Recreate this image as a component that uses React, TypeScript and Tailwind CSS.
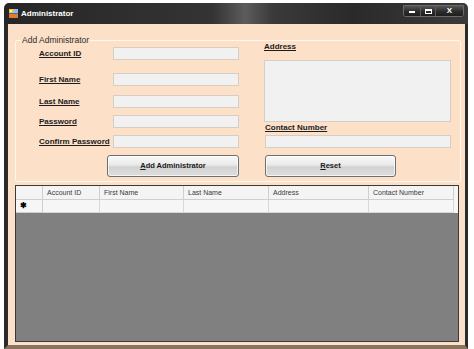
import React from 'react';

const font = "font-['Liberation_Sans',Arial,sans-serif]";

function Field({ label, width = 'w-[126px]' }: { label: string; width?: string }) {
  return (
    <div className="flex h-[13px] items-center">
      <span className="w-[74px] text-[8px] font-bold leading-none text-[#1c1c1c] underline">
        {label}
      </span>
      <div className={`h-[13px] ${width} border border-[#d6cdc4] bg-[#f1f1f1]`} />
    </div>
  );
}

function WinButton({ className, children }: { className: string; children: React.ReactNode }) {
  return (
    <button
      className={`${className} block h-[22px] rounded-[3px] border border-[#6f6f6f] bg-[linear-gradient(180deg,#fafafa_0%,#e9e9e9_45%,#d2d2d2_55%,#dedede_100%)] text-[7.5px] font-bold text-[#1a1a1a] shadow-[inset_0_0_0_1px_#ffffffaa]`}
    >
      {children}
    </button>
  );
}

const columns = [
  { name: 'Account ID', w: 'w-[57px]' },
  { name: 'First Name', w: 'w-[84px]' },
  { name: 'Last Name', w: 'w-[85px]' },
  { name: 'Address', w: 'w-[100px]' },
  { name: 'Contact Number', w: 'w-[85px]' },
];

export default function App() {
  return (
    <div className={`${font} h-[349px] w-[474px] overflow-hidden bg-white pl-[4px] pt-[3px]`}>
      <div className="flex w-[464px] flex-col">
        {/* title bar */}
        <div className="flex h-[21px] items-center rounded-t-[5px] bg-[linear-gradient(90deg,#262626_0%,#343434_45%,#5c5c5c_52%,#3a3a3a_58%,#2a2a2a_75%,#3a3a3a_100%)] pl-[5px]">
          <svg width="9" height="9" viewBox="0 0 9 9" className="shrink-0">
            <rect x="0" y="0" width="9" height="9" fill="#3b6fc4" />
            <rect x="0" y="0" width="5" height="4" fill="#f3c23a" />
            <rect x="5" y="0" width="4" height="4" fill="#8fb8ee" />
            <rect x="0" y="5" width="9" height="4" fill="#e27b2c" />
            <rect x="1" y="1" width="2" height="2" fill="#fff3b0" />
          </svg>
          <span className="ml-[3px] text-[8px] font-bold leading-none text-white">Administrator</span>
          <div className="ml-auto mr-[4px] mt-[2px] flex h-[12px] self-start overflow-hidden rounded-b-[3px] border border-[#6a6a6a] bg-[#2a2a2a]">
            <div className="flex w-[17px] items-end justify-center border-r border-[#5a5a5a] bg-[linear-gradient(180deg,#555_0%,#2c2c2c_55%,#1e1e1e_100%)] pb-[3px]">
              <div className="h-[2px] w-[6px] bg-white" />
            </div>
            <div className="flex w-[15px] items-center justify-center border-r border-[#5a5a5a] bg-[linear-gradient(180deg,#555_0%,#2c2c2c_55%,#1e1e1e_100%)]">
              <div className="h-[5px] w-[7px] border border-t-2 border-white" />
            </div>
            <div className="flex w-[27px] items-center justify-center bg-[linear-gradient(180deg,#555_0%,#2c2c2c_55%,#1e1e1e_100%)] text-[8px] font-bold leading-none text-white">
              X
            </div>
          </div>
        </div>

        {/* client area */}
        <div className="flex flex-col border-b-[4px] border-l-[4px] border-r-[3px] border-b-[#8a735e] border-l-[#2b2b2b] border-r-[#2b2b2b] bg-[#fde0c8] pb-[3px] pl-[7px] pr-[4px] pt-[16px]">
          {/* group box */}
          <div className="relative h-[142px] w-[446px] rounded-[2px] border border-[#fff6ee]">
            <span className="absolute -top-[6px] left-[5px] bg-[#fde0c8] px-[1px] text-[8.5px] leading-[10px] text-[#2e2e2e]">
              Add Administrator
            </span>
            <div className="flex items-start pl-[23px] pt-[6px]">
              <div className="flex w-[200px] flex-col">
                <Field label="Account ID" />
                <div className="mt-[13px]">
                  <Field label="First Name" />
                </div>
                <div className="mt-[9px]">
                  <Field label="Last Name" />
                </div>
                <div className="mt-[7px]">
                  <Field label="Password" />
                </div>
                <div className="mt-[7px]">
                  <Field label="Confirm Password" />
                </div>
                <div className="mt-[7px] flex pl-[68px]">
                  <WinButton className="w-[132px]">
                    <span className="underline">A</span>dd Administrator
                  </WinButton>
                </div>
              </div>
              <div className="-mt-[5px] ml-[25px] flex w-[187px] flex-col">
                <span className="h-[10px] text-[8px] font-bold leading-[10px] text-[#1c1c1c] underline">
                  Address
                </span>
                <div className="mt-[8px] h-[62px] w-[187px] border border-[#d6cdc4] bg-[#f1f1f1]" />
                <span className="mt-[1px] h-[10px] pl-[1px] text-[8px] font-bold leading-[10px] text-[#1c1c1c] underline">
                  Contact Number
                </span>
                <div className="ml-[1px] mt-[2px] h-[13px] w-[186px] border border-[#d6cdc4] bg-[#f1f1f1]" />
                <div className="mt-[7px] flex pl-[1px]">
                  <WinButton className="w-[131px]">
                    <span className="underline">R</span>eset
                  </WinButton>
                </div>
              </div>
            </div>
          </div>

          {/* data grid */}
          <div className="mt-[3px] flex h-[157px] w-[444px] flex-col border border-[#3a3a3a] bg-[#808080]">
            <div className="flex h-[14px] bg-[#f4f4f4]">
              <div className="w-[27px] border-b border-r border-[#cfcfcf]" />
              {columns.map((c) => (
                <div
                  key={c.name}
                  className={`${c.w} border-b border-r border-[#cfcfcf] pl-[4px] text-[7px] leading-[13px] text-[#3a3a3a]`}
                >
                  {c.name}
                </div>
              ))}
            </div>
            <div className="flex h-[13px] bg-[#f6f6f6]">
              <div className="flex w-[27px] items-center border-b border-r border-[#cfcfcf] pl-[4px] text-[8px] font-bold leading-none text-black">
                ✱
              </div>
              {columns.map((c) => (
                <div key={c.name} className={`${c.w} border-b border-r border-[#d8d8d8]`} />
              ))}
            </div>
          </div>
        </div>
      </div>
    </div>
  );
}
